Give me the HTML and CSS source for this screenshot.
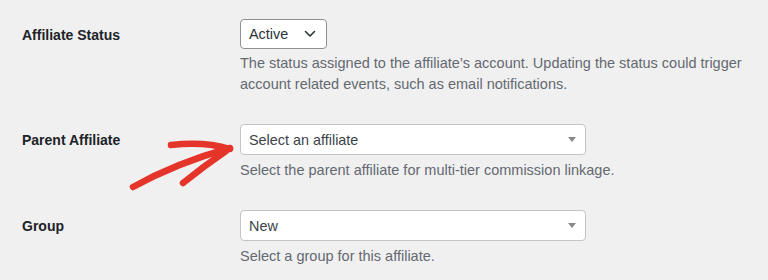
FILE: index.html
```html
<!DOCTYPE html>
<html>
<head>
<meta charset="utf-8">
<link rel="stylesheet" href="styles.css">
</head>
<body>
<div class="form">
  <div class="row">
    <div class="label">Affiliate Status</div>
    <div class="field">
      <div class="select small">
        <span>Active</span>
        <svg class="chev" width="12" height="8" viewBox="0 0 12 8"><path d="M1.5 1.5 L6 6 L10.5 1.5" fill="none" stroke="#2c3338" stroke-width="1.6" stroke-linecap="round" stroke-linejoin="round"/></svg>
      </div>
      <p class="desc">The status assigned to the affiliate’s account. Updating the status could trigger account related events, such as email notifications.</p>
    </div>
  </div>
  <div class="row">
    <div class="label">Parent Affiliate</div>
    <div class="field">
      <div class="select wide">
        <span>Select an affiliate</span>
        <span class="tri"></span>
      </div>
      <p class="desc">Select the parent affiliate for multi-tier commission linkage.</p>
    </div>
  </div>
  <div class="row">
    <div class="label">Group</div>
    <div class="field">
      <div class="select wide">
        <span>New</span>
        <span class="tri"></span>
      </div>
      <p class="desc">Select a group for this affiliate.</p>
    </div>
  </div>
</div>
<svg class="arrow" width="130" height="65" viewBox="0 0 130 65">
  <g fill="none" stroke="#e5342a" stroke-width="6.5" stroke-linecap="round" stroke-linejoin="round">
    <path d="M13 57 Q 56 33 110 18"/>
    <path d="M51 15 Q 84 11 110 19"/>
    <path d="M63 53 Q 84 36 106 21"/>
  </g>
</svg>
</body>
</html>
```
FILE: styles.css
```css
html, body {
  margin: 0;
  padding: 0;
  background: #f0f0f1;
  width: 768px;
  height: 280px;
  overflow: hidden;
  font-family: "Liberation Sans", Arial, sans-serif;
  font-size: 14px;
  color: #1d2327;
}
body { position: relative; }
.form {
  display: flex;
  flex-direction: column;
  gap: 29px;
  padding: 19px 0 0 22px;
}
.row {
  display: flex;
  align-items: flex-start;
}
.label {
  width: 218px;
  flex: none;
  font-weight: bold;
  line-height: 18px;
  padding-top: 7px;
  color: #1d2327;
}
.field {
  display: flex;
  flex-direction: column;
  align-items: flex-start;
}
.select {
  box-sizing: border-box;
  display: flex;
  align-items: center;
  justify-content: space-between;
  background: #fff;
  border-radius: 4px;
  color: #2c3338;
  line-height: 18px;
  font-size: 14.4px;
}
.select.small {
  width: 87px;
  height: 30px;
  border: 1px solid #8c8f94;
  padding: 0 10px 0 8px;
}
.select.wide {
  width: 346px;
  height: 31px;
  border: 1px solid #c3c4c7;
  padding: 0 8px 0 8px;
  color: #3c434a;
}
.chev { display: block; }
.tri {
  width: 0;
  height: 0;
  border-left: 4px solid transparent;
  border-right: 4px solid transparent;
  border-top: 5px solid #888;
  margin-right: 1px;
}
.desc {
  margin: 4px 0 0;
  line-height: 21px;
  font-size: 14.5px;
  color: #646970;
  max-width: 520px;
}
.wide + .desc { margin-top: 5px; }
.arrow {
  position: absolute;
  left: 120px;
  top: 130px;
}
```
